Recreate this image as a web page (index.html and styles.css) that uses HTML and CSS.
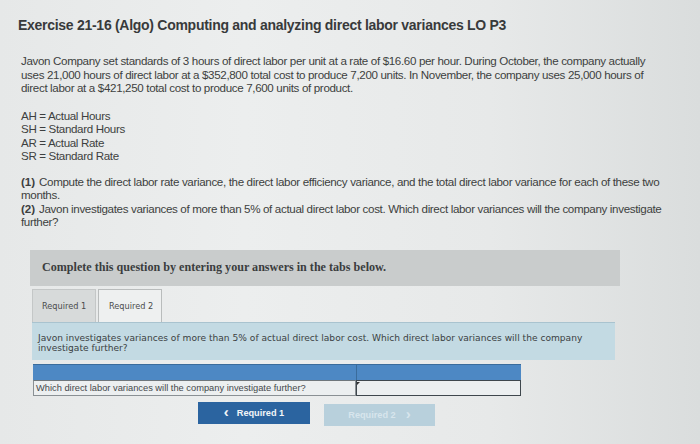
FILE: index.html
```html
<!DOCTYPE html>
<html>
<head>
<meta charset="utf-8">
<link rel="stylesheet" href="styles.css">
</head>
<body>
<div class="page">
  <h1 class="title">Exercise 21-16 (Algo) Computing and analyzing direct labor variances LO P3</h1>
  <p class="intro">Javon Company set standards of 3 hours of direct labor per unit at a rate of $16.60 per hour. During October, the company actually uses 21,000 hours of direct labor at a $352,800 total cost to produce 7,200 units. In November, the company uses 25,000 hours of direct labor at a $421,250 total cost to produce 7,600 units of product.</p>
  <div class="defs">
    <div>AH = Actual Hours</div>
    <div>SH = Standard Hours</div>
    <div>AR = Actual Rate</div>
    <div>SR = Standard Rate</div>
  </div>
  <div class="reqs">
    <p><b class="num">(1)</b> Compute the direct labor rate variance, the direct labor efficiency variance, and the total direct labor variance for each of these two months.</p>
    <p><b class="num">(2)</b> Javon investigates variances of more than 5% of actual direct labor cost. Which direct labor variances will the company investigate further?</p>
  </div>

  <div class="answer">
    <div class="banner">Complete this question by entering your answers in the tabs below.</div>
    <div class="tabs">
      <div class="tab">Required 1</div>
      <div class="tab active">Required 2</div>
    </div>
    <div class="panel">Javon investigates variances of more than 5% of actual direct labor cost. Which direct labor variances will the company investigate further?</div>
    <div class="grid">
      <div class="hcell"></div>
      <div class="hcell"></div>
      <div class="cell">Which direct labor variances will the company investigate further?</div>
      <div class="cell input"><span class="caret"></span></div>
    </div>
    <div class="nav">
      <div class="btn prev"><span class="chev">&lsaquo;</span> Required 1</div>
      <div class="btn next">Required 2 <span class="chev">&rsaquo;</span></div>
    </div>
  </div>
</div>
</body>
</html>
```
FILE: styles.css
```css
html, body {
  margin: 0;
  padding: 0;
}
body {
  width: 700px;
  height: 444px;
  overflow: hidden;
  background: linear-gradient(90deg, #e6e8e8 0%, #eceeee 35%, #e7e9e9 70%, #dadddd 100%);
  font-family: "Liberation Sans", Arial, sans-serif;
  color: #3d3f40;
}
.page {
  padding: 17px 0 0 21px;
}
.title {
  margin: 0 0 0 -3px;
  font-size: 14px;
  line-height: 16px;
  font-weight: bold;
  letter-spacing: -0.28px;
  color: #383a3b;
}
.intro {
  margin: 21px 0 0 0;
  width: 648px;
  font-size: 11.6px;
  line-height: 13.5px;
  letter-spacing: -0.35px;
}
.defs {
  margin-top: 14px;
  font-size: 11.6px;
  line-height: 13.6px;
  letter-spacing: -0.35px;
}
.reqs {
  margin-top: 12px;
  width: 662px;
  font-size: 11.6px;
  line-height: 13.5px;
  letter-spacing: -0.35px;
}
.reqs p {
  margin: 0;
}
.num {
  letter-spacing: 0;
  margin-right: 1px;
}
.answer {
  margin: 21px 0 0 9px;
  width: 590px;
}
.banner {
  background: #c9cccc;
  height: 36px;
  display: flex;
  align-items: center;
  padding-left: 12px;
  font-family: "Liberation Serif", "Times New Roman", serif;
  font-weight: bold;
  font-size: 12.1px;
  color: #3b3d3e;
}
.tabs {
  display: flex;
  margin-top: 3px;
  padding-left: 2px;
}
.tab {
  width: 64px;
  height: 33px;
  box-sizing: border-box;
  display: flex;
  align-items: center;
  padding-left: 9px;
  font-family: "DejaVu Sans", Verdana, sans-serif;
  font-size: 8.2px;
  color: #4a4c4d;
  background: #d7dada;
  border: 1px solid #c4c7c7;
  border-bottom: none;
}
.tab.active {
  background: #eef0f0;
  border-color: #b9bcbc;
  margin-left: 2px;
  width: 64px;
  padding-left: 10px;
}
.panel {
  margin-left: 2px;
  width: 583px;
  box-sizing: border-box;
  height: 38px;
  background: #c3dae3;
  border-top: 1px solid #a9c3cf;
  padding: 10px 6px 0 6px;
  font-family: "DejaVu Sans", Verdana, sans-serif;
  font-size: 9.1px;
  line-height: 10.5px;
  color: #3b3f42;
}
.grid {
  margin: 4px 0 0 3px;
  width: 488px;
  display: grid;
  grid-template-columns: 323px 165px;
}
.hcell {
  height: 16px;
  box-sizing: border-box;
  background: #4d88c4;
  border-top: 1px solid #3a6c9c;
}
.hcell + .hcell {
  border-left: 1px solid #3a6c9c;
}
.cell {
  height: 16px;
  box-sizing: border-box;
  background: #eceff0;
  border: 1px solid #8a9094;
  border-top: 1px solid #6f777c;
  font-size: 9.3px;
  line-height: 14px;
  padding-left: 2px;
  color: #45494c;
}
.cell.input {
  border: 1.5px solid #3f474d;
  position: relative;
}
.caret {
  position: absolute;
  left: 0;
  top: 1px;
  border-left: 3px solid #333;
  border-bottom: 3px solid transparent;
}
.nav {
  display: flex;
  margin: 6px 0 0 168px;
  gap: 14px;
  align-items: flex-start;
}
.btn {
  height: 22px;
  box-sizing: border-box;
  display: flex;
  align-items: center;
  justify-content: center;
  font-size: 9.2px;
  font-weight: bold;
}
.btn.prev {
  width: 112px;
  background: #2b64a0;
  color: #f2f5f8;
}
.btn.next {
  width: 111px;
  margin-top: 2px;
  background: #b8d0dc;
  color: #d7e5ec;
}
.chev {
  font-size: 15px;
  line-height: 10px;
  margin: 0 8px 2px 0;
}
.btn.next .chev {
  margin: 0 0 2px 10px;
}
```
